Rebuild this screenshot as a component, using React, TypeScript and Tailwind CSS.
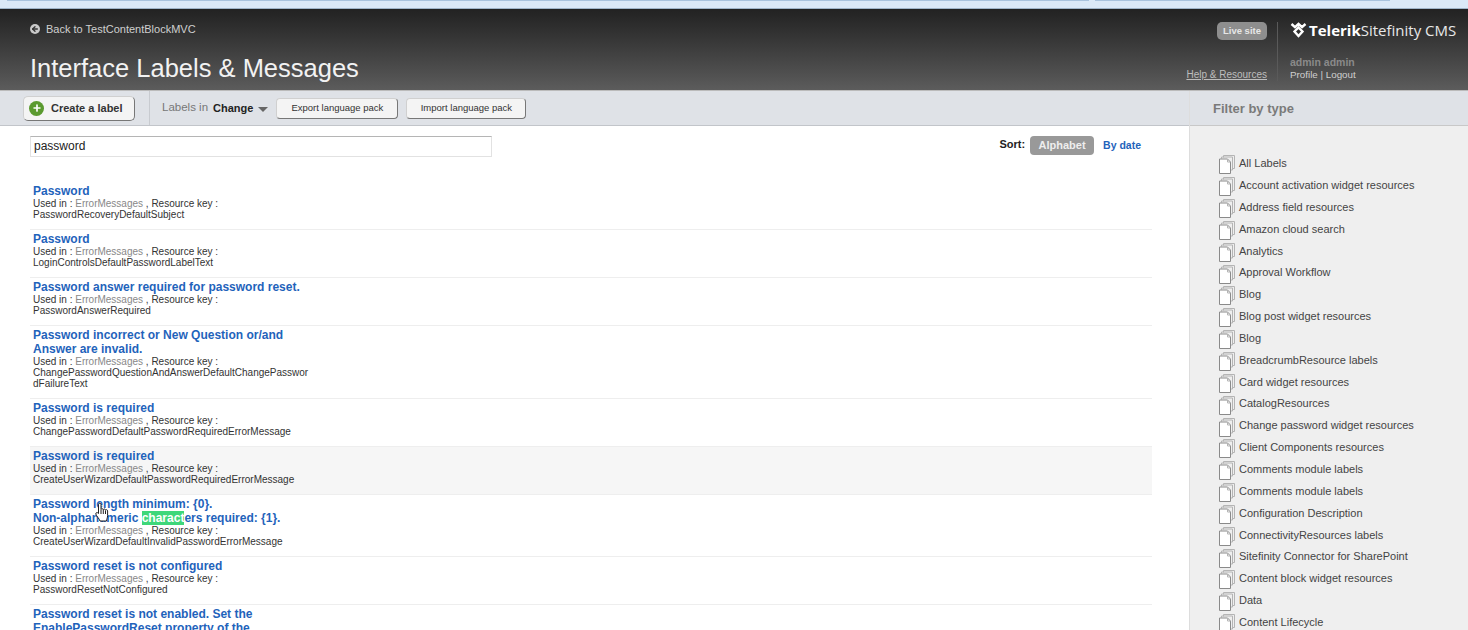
import { ArrowLeft, Plus } from "lucide-react";

const rows = [
  { title: "Password", key: "PasswordRecoveryDefaultSubject" },
  { title: "Password", key: "LoginControlsDefaultPasswordLabelText" },
  { title: "Password answer required for password reset.", key: "PasswordAnswerRequired" },
  {
    title: "Password incorrect or New Question or/and Answer are invalid.",
    key: "ChangePasswordQuestionAndAnswerDefaultChangePasswordFailureText",
  },
  { title: "Password is required", key: "ChangePasswordDefaultPasswordRequiredErrorMessage" },
  { title: "Password is required", key: "CreateUserWizardDefaultPasswordRequiredErrorMessage", hover: true },
  { title: "length", key: "CreateUserWizardDefaultInvalidPasswordErrorMessage" },
  { title: "Password reset is not configured", key: "PasswordResetNotConfigured" },
  { title: "Password reset is not enabled. Set the EnablePasswordReset property of the", key: "" },
];

const filters = [
  "All Labels",
  "Account activation widget resources",
  "Address field resources",
  "Amazon cloud search",
  "Analytics",
  "Approval Workflow",
  "Blog",
  "Blog post widget resources",
  "Blog",
  "BreadcrumbResource labels",
  "Card widget resources",
  "CatalogResources",
  "Change password widget resources",
  "Client Components resources",
  "Comments module labels",
  "Comments module labels",
  "Configuration Description",
  "ConnectivityResources labels",
  "Sitefinity Connector for SharePoint",
  "Content block widget resources",
  "Data",
  "Content Lifecycle",
];

function PagesIcon() {
  return (
    <svg width="16" height="19" viewBox="0 0 16 19" className="shrink-0" fill="none">
      <path d="M4.5 2.5V0.5H15.5V13.5H13.5" stroke="#b4b4b4" />
      <path d="M2.5 3.5V2H13.5V15H11.5" stroke="#b4b4b4" />
      <path d="M0.5 4H8.5L11.5 7V18.5H0.5Z" fill="#fff" stroke="#8a8a8a" />
      <path d="M8.5 4V7H11.5" stroke="#b4b4b4" />
    </svg>
  );
}

function HandCursor() {
  return (
    <svg width="15" height="20" viewBox="0 0 15 20" className="absolute left-[95px] top-[502px]">
      <path
        d="M3.5 10V2.5C3.5 0.8 6 0.8 6 2.5V7.5C6 6.4 8.2 6.4 8.3 7.7C8.4 6.7 10.4 6.8 10.5 8.1C10.8 7.3 12.6 7.5 12.6 9V13.5C12.6 16 11.5 17 11.5 19H5C5 17.5 1 13.5 0.8 12C0.6 10.4 2.4 10 3.5 11.5Z"
        fill="#fff"
        stroke="#222"
      />
      <path d="M6 8V12M8.3 8V12M10.5 8.5V12" stroke="#222" />
    </svg>
  );
}

function TelerikMark() {
  return (
    <svg width="17" height="16" viewBox="0 0 17 16" fill="none" stroke="#fff" strokeWidth="2.4">
      <path d="M1.5 2L5 5.2L8.5 2L12 5.2L15.5 2" />
      <path d="M8.5 5.5L12.5 9.5L8.5 14L4.5 9.5Z" />
    </svg>
  );
}

export default function App() {
  return (
    <div className="h-[630px] overflow-hidden bg-white font-['Liberation_Sans',Arial,sans-serif] relative">
      {/* Browser chrome sliver */}
      <div className="h-[9px] bg-[#dbe9f7] border-b border-[#9fb4c8] flex items-start pl-[7px]">
        <div className="w-[1082px] h-px bg-[#a9c3dd]" />
        <div className="ml-[6px] w-[295px] h-px bg-[#a9c3dd]" />
      </div>

      {/* Header */}
      <header className="h-[82px] flex justify-between bg-gradient-to-b from-[#222222] to-[#5c5c5c] border-b border-[#bbbbbb]">
        <div className="pl-[30px] pt-[13px]">
          <a className="flex items-center gap-[6px] text-[11px] leading-[14px] text-[#cfcfcf]">
            <span className="w-[10px] h-[10px] rounded-full bg-[#c9c9c9] flex items-center justify-center">
              <ArrowLeft size={8} strokeWidth={4} className="text-[#333]" />
            </span>
            Back to TestContentBlockMVC
          </a>
          <h1 className="mt-[16px] text-[25.5px] leading-[32px] text-[#f2f2f2]">Interface Labels &amp; Messages</h1>
        </div>
        <div className="flex">
          <div className="flex flex-col items-end justify-between pt-[13px] pb-[9px] pr-[10px]">
            <span className="h-[18px] px-[6px] rounded-[5px] bg-[#8e8e8e] text-[9.5px] font-bold leading-[18px] text-[#e6e6e6]">
              Live site
            </span>
            <a className="text-[10px] leading-3 text-[#bdbdbd] underline">Help &amp; Resources</a>
          </div>
          <div className="mt-[13px] mb-[9px] border-l border-[#5a5a5a] pl-[12px] pr-[10px] w-[191px] flex flex-col justify-between">
            <div className="flex items-center gap-[2px] font-['Open_Sans',sans-serif] text-[15px] leading-[16px] text-[#e8e8e8] whitespace-nowrap">
              <TelerikMark />
              <span>
                <span className="font-bold text-white">Telerik</span>Sitefinity CMS
              </span>
            </div>
            <div className="text-[9.8px] leading-3 text-[#cfcfcf]">
              <div className="mb-px text-[#8a8a8a] font-bold text-[10.5px]">admin admin</div>
              <div>Profile | Logout</div>
            </div>
          </div>
        </div>
      </header>

      <div className="flex">
        {/* Main column */}
        <main className="flex-1 min-w-0">
          <div className="h-[35px] bg-[#dfe2e7] border-b border-[#c2c5ca] flex items-center pl-[23px]">
            <button className="h-[25px] w-[112px] flex items-center gap-[7px] pl-[5px] rounded-[5px] bg-[#f4f4f4] border border-[#d0d0d0] border-r-[#777] border-b-[#777] text-[11px] font-bold text-[#333]">
              <span className="w-[15px] h-[15px] rounded-full bg-[#5b9a2f] flex items-center justify-center">
                <Plus size={10} strokeWidth={4} className="text-white" />
              </span>
              Create a label
            </button>
            <div className="ml-[14px] h-full border-l border-[#c8cbd0] pl-[12px] flex items-center text-xs">
              <span className="text-[11.5px] text-[#777]">Labels in</span>
              <span className="ml-[5px] text-[11px] font-bold text-[#222]">Change</span>
              <span className="ml-[5px] w-0 h-0 mt-[2px] border-x-[5px] border-x-transparent border-t-[5px] border-t-[#666]" />
              <button className="ml-[8px] mt-px h-[21px] w-[122px] rounded-[4px] bg-[#f4f4f4] border border-[#d0d0d0] border-r-[#777] border-b-[#777] text-[9.5px] text-[#333]">
                Export language pack
              </button>
              <button className="ml-[8px] mt-px h-[21px] w-[120px] rounded-[4px] bg-[#f4f4f4] border border-[#d0d0d0] border-r-[#777] border-b-[#777] text-[9.5px] text-[#333]">
                Import language pack
              </button>
            </div>
          </div>

          <div className="pl-[30px] pr-[37px]">
            <div className="h-[56px] pt-[10px] flex justify-between items-start">
              <div className="w-[462px] h-[21px] border border-[#e2e2e2] border-t-[#b5b5b5] pl-[3px] text-xs leading-[19px] text-[#222]">
                password
              </div>
              <div className="flex items-center text-[11px] font-bold pr-[11px]">
                <span className="text-[#222] -mt-[2px]">Sort:</span>
                <span className="ml-[5px] h-[19px] w-[64px] text-center rounded-[4px] bg-[#999] leading-[19px] text-[#eee]">Alphabet</span>
                <a className="ml-[9px] text-[10.5px] text-[#1f63bb]">By date</a>
              </div>
            </div>

            {rows.map((row, i) => (
              <div
                key={i}
                className={`pt-[2px] pb-[9px] pl-[3px] border-b border-[#eeeeee] ${row.hover ? "bg-[#f6f6f6]" : ""}`}
              >
                <div className="w-[280px] text-xs leading-[14px] font-bold text-[#1f63bb]">
                  {row.title === "length" ? (
                    <span className="block w-[300px]">
                      Password length minimum: {"{0}"}.<br />
                      Non-alphanumeric <span className="bg-[#3ed77a] text-white">charact</span>ers required: {"{1}"}.
                    </span>
                  ) : (
                    row.title
                  )}
                </div>
                {row.key && (
                  <div className="w-[280px] text-[10px] leading-[11px] text-[#333] break-all">
                    <div>
                      Used in : <span className="text-[#888]">ErrorMessages</span> , Resource key :
                    </div>
                    <div>{row.key}</div>
                  </div>
                )}
              </div>
            ))}
          </div>
        </main>

        {/* Filter sidebar */}
        <aside className="w-[279px] h-[540px] shrink-0 bg-[#efefef] border-l border-[#dddddd]">
          <div className="h-[35px] bg-[#dfe2e7] border-b border-[#c8c8c8] pl-[23px] text-[13px] font-bold leading-[35px] text-[#7a7a7a]">
            Filter by type
          </div>
          <ul className="pt-[28px] pl-[29px]">
            {filters.map((f, i) => (
              <li key={i} className="h-[21.85px] flex items-center gap-[4px] text-[11px] text-[#444]">
                <PagesIcon />
                <span className="-mt-[3px]">{f}</span>
              </li>
            ))}
          </ul>
        </aside>
      </div>

      <HandCursor />
    </div>
  );
}
